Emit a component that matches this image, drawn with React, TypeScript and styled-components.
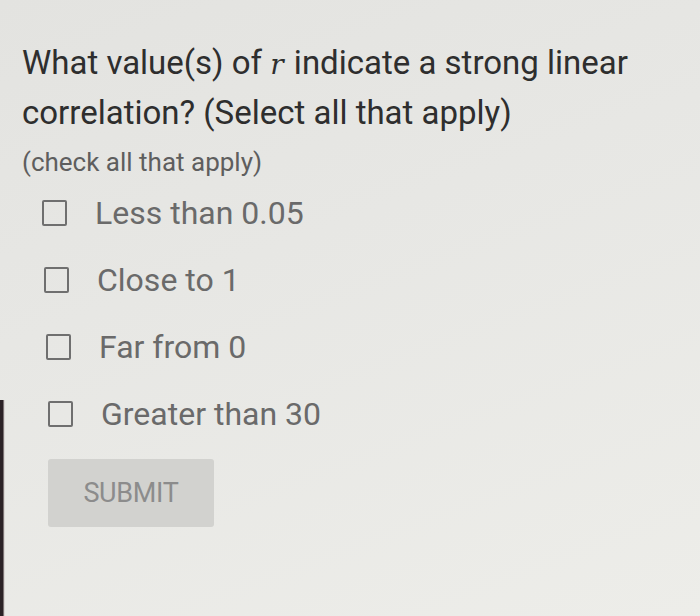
import React from "react";
import styled, { createGlobalStyle } from "styled-components";

const Global = createGlobalStyle`
  html, body { margin: 0; padding: 0; }
  body {
    width: 700px;
    height: 616px;
    overflow: hidden;
    background:
      linear-gradient(to right, #2b2226 0, #2b2226 3px, #c9c2c0 4px, transparent 5px) 0 400px / 6px 216px no-repeat,
      linear-gradient(160deg, #e3e3e0 0%, #e7e7e4 40%, #edede9 100%);
    font-family: Roboto, "Noto Sans", "Liberation Sans", sans-serif;
  }
`;

const Page = styled.main`
  padding: 39px 0 0 22px;
  display: flex;
  flex-direction: column;
  align-items: flex-start;
`;

const Question = styled.h1`
  margin: 0;
  font-size: 33px;
  line-height: 48px;
  font-weight: 400;
  color: #2e2e2e;
  width: 640px;
`;

const Var = styled.i`
  font-family: "DejaVu Serif", "Liberation Serif", serif;
  font-style: italic;
  font-size: 28px;
  margin-right: 2px;
`;

const Hint = styled.p`
  margin: 9px 0 0;
  font-size: 26px;
  line-height: 32px;
  color: #5e5e5e;
`;

const Options = styled.div`
  margin: 15px 0 0 20px;
  display: flex;
  flex-direction: column;
  gap: 27px;
`;

const Row = styled.label<{ $shift: number }>`
  display: flex;
  align-items: center;
  gap: 28px;
  height: 40px;
  padding-left: ${(p) => p.$shift}px;
  cursor: pointer;
`;

const Box = styled.span`
  width: 21px;
  height: 22px;
  border: 2.5px solid #6f6f6f;
  border-radius: 2px;
  box-sizing: content-box;
  flex: none;
`;

const Label = styled.span`
  font-size: 32px;
  color: #6a6a6a;
  line-height: 40px;
`;

const Submit = styled.button`
  margin: 25px 0 0 26px;
  width: 166px;
  height: 68px;
  border: none;
  border-radius: 3px;
  background: #d2d2cf;
  color: #8c8c8c;
  font-family: Roboto, "Noto Sans", "Liberation Sans", sans-serif;
  font-size: 27px;
  font-weight: 400;
  letter-spacing: -0.3px;
  cursor: default;
`;

const options = ["Less than 0.05", "Close to 1", "Far from 0", "Greater than 30"];

export default function App() {
  return (
    <>
      <Global />
      <Page>
        <Question>
          What value(s) of <Var>r</Var> indicate a strong linear correlation? (Select all that apply)
        </Question>
        <Hint>(check all that apply)</Hint>
        <Options>
          {options.map((o, i) => (
            <Row key={o} $shift={i * 2}>
              <Box />
              <Label>{o}</Label>
            </Row>
          ))}
        </Options>
        <Submit disabled>SUBMIT</Submit>
      </Page>
    </>
  );
}
